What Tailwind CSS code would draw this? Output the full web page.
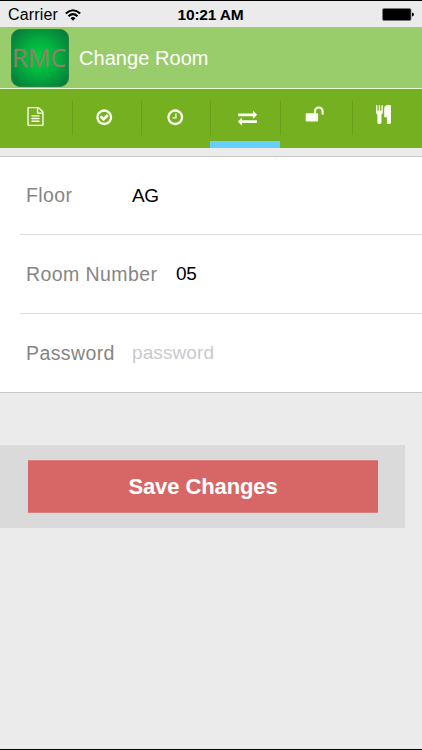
<!DOCTYPE html>
<html lang="en">
<head>
<meta charset="utf-8">
<title>Change Room</title>
<script src="https://cdn.jsdelivr.net/npm/@tailwindcss/browser@4"></script>
</head>
<body class="h-[750px] w-[422px] overflow-hidden border-b border-black bg-[#ebebeb] font-['Liberation_Sans',Arial,sans-serif]">
<div class="grid h-[27px] grid-cols-3 items-center border-t border-black bg-[#ebebeb] pt-px text-black">
  <div class="flex items-center gap-[7px] pl-2">
    <span class="text-base leading-none tracking-[0.15px]">Carrier</span>
    <svg class="h-3 w-4" viewBox="0 0 16 12" fill="none" stroke="#000" stroke-width="2"><path d="M.8 4.6Q8-2.2 15.200 4.600M3.500 7.300Q8 3 12.500 7.300"/><path d="M5.500 9.200Q8 7 10.500 9.200L8 11.800Z" fill="#000" stroke="none"/></svg>
  </div>
  <span class="pr-px text-center text-[15.5px] leading-none font-bold tracking-[-0.2px]">10:21 AM</span>
  <svg class="mr-[8px] h-[13px] w-8 justify-self-end" viewBox="0 0 32 13"><rect x=".5" y=".5" width="28.500" height="12" rx="1.500" fill="#000" stroke="#777" stroke-width=".8"/><path d="M30 4.500Q32 5 32 6.500T30 8.500Z"/></svg>
</div>
<header class="flex h-[61px] items-center gap-[10px] bg-[#99cd6b] pl-[11px]">
  <svg class="h-[58px] w-[58px]" viewBox="0 0 58 58">
    <defs><radialGradient id="g" cx=".5" cy=".5" r=".68"><stop offset="0" stop-color="#00d042"/><stop offset=".4" stop-color="#00b53f"/><stop offset="1" stop-color="#08743a"/></radialGradient></defs>
    <rect x=".5" y=".5" width="57" height="57" rx="8.500" fill="url(#g)" stroke="#278947"/>
    <text x="1" y="38" textLength="54" lengthAdjust="spacingAndGlyphs" font-family="Open Sans, sans-serif" font-size="26" fill="#8a8266" stroke="#8a8266" stroke-width=".3">RMC</text>
  </svg>
  <h1 class="text-xl leading-none tracking-[0.05px] text-white">Change Room</h1>
</header>
<nav class="flex h-[60px] border-t-[1.5px] border-[#e8f5d5] bg-[#74b01f] text-[#fbfff2]">
  <div class="flex w-[73px] shrink-0 justify-between pl-[26px]"><svg class="mt-[18px] size-[19px]" viewBox="0 0 1792 1792" fill="currentColor"><path d="M1596 380q28 28 48 76t20 88v1152q0 40-28 68t-68 28h-1344q-40 0-68-28t-28-68v-1600q0-40 28-68t68-28h896q40 0 88 20t76 48zm-444-244v376h376q-10-29-22-41l-313-313q-12-12-41-22zm384 1528v-1024h-416q-40 0-68-28t-28-68v-416h-768v1536h1280zm-1024-864q0-14 9-23t23-9h704q14 0 23 9t9 23v64q0 14-9 23t-23 9h-704q-14 0-23-9t-9-23v-64zm736 224q14 0 23 9t9 23v64q0 14-9 23t-23 9h-704q-14 0-23-9t-9-23v-64q0-14 9-23t23-9h704zm0 256q14 0 23 9t9 23v64q0 14-9 23t-23 9h-704q-14 0-23-9t-9-23v-64q0-14 9-23t23-9h704z"/></svg><div class="mt-3 h-[34px] w-px bg-[#68a01a]"></div></div>
  <div class="flex w-[68px] pt-[18.500px] pl-[22px]"><svg class="size-[18.500px]" viewBox="0 0 1792 1792" fill="currentColor"><path d="M1299 813l-422 422q-19 19-45 19t-45-19l-294-294q-19-19-19-45t19-45l102-102q19-19 45-19t45 19l147 147 275-275q19-19 45-19t45 19l102 102q19 19 19 45t-19 45zm141 83q0-148-73-273t-198-198-273-73-273 73-198 198-73 273 73 273 198 198 273 73 273-73 198-198 73-273zm224 0q0 209-103 385.500t-279.500 279.500-385.500 103-385.500-103-279.500-279.500-103-385.500 103-385.500 279.500-279.500 385.500-103 385.500 103 279.500 279.500 103 385.500z"/></svg></div>
  <div class="mt-3 h-[34px] w-px bg-[#68a01a]"></div>
  <div class="flex w-[68px] pt-[18.500px] pl-[24px]"><svg class="size-[18.500px]" viewBox="0 0 1792 1792" fill="currentColor"><path d="M1024 544v448q0 14-9 23t-23 9h-320q-14 0-23-9t-9-23v-64q0-14 9-23t23-9h224v-352q0-14 9-23t23-9h64q14 0 23 9t9 23zm416 352q0-148-73-273t-198-198-273-73-273 73-198 198-73 273 73 273 198 198 273 73 273-73 198-198 73-273zm224 0q0 209-103 385.500t-279.500 279.500-385.500 103-385.500-103-279.500-279.500-103-385.500 103-385.500 279.500-279.500 385.500-103 385.500 103 279.500 279.500 103 385.500z"/></svg></div>
  <div class="flex w-[70px] flex-col justify-between">
    <div class="flex"><div class="mt-3 h-[34px] w-px bg-[#68a01a]"></div><svg class="mt-[18.500px] ml-[27px] size-[19px]" viewBox="0 0 1792 1792" fill="currentColor"><path d="M1792 1184v192q0 13-9.500 22.500t-22.500 9.500h-1376v192q0 13-9.500 22.500t-22.500 9.500q-12 0-24-10l-319-320q-9-9-9-22 0-14 9-23l320-320q9-9 23-9 13 0 22.500 9.500t9.500 22.500v192h1376q13 0 22.500 9.500t9.500 22.500zm0-544q0 14-9 23l-320 320q-9 9-23 9-13 0-22.500-9.500t-9.500-22.500v-192h-1376q-13 0-22.500-9.500t-9.500-22.500v-192q0-13 9.500-22.500t22.500-9.500h1376v-192q0-14 9-23t23-9q12 0 24 10l319 319q9 9 9 23z"/></svg></div>
    <div class="h-[7.500px] w-[70px] bg-[#66cffb]"></div>
  </div>
  <div class="mt-3 h-[34px] w-px bg-[#68a01a]"></div>
  <div class="flex w-[71px] pt-[16px] pl-[24px]"><svg class="size-[19.300px]" viewBox="0 0 1792 1792" fill="currentColor"><path d="M1728 576v256q0 26-19 45t-45 19h-64q-26 0-45-19t-19-45v-256q0-106-75-181t-181-75-181 75-75 181v192h96q40 0 68 28t28 68v576q0 40-28 68t-68 28h-960q-40 0-68-28t-28-68v-576q0-40 28-68t68-28h672v-192q0-185 131.500-316.500t316.500-131.500 316.500 131.500 131.500 316.500z"/></svg></div>
  <div class="mt-3 h-[34px] w-px bg-[#68a01a]"></div>
  <div class="flex flex-1 pt-[16px] pl-[21px]"><svg class="size-[19px]" viewBox="0 0 1792 1792" fill="currentColor"><path d="M832 64v640q0 61-35.500 111t-92.500 70v779q0 52-38 90t-90 38h-128q-52 0-90-38t-38-90v-779q-57-20-92.500-70t-35.500-111v-640q0-26 19-45t45-19 45 19 19 45v416q0 26 19 45t45 19 45-19 19-45v-416q0-26 19-45t45-19 45 19 19 45v416q0 26 19 45t45 19 45-19 19-45v-416q0-26 19-45t45-19 45 19 19 45zm768 0v1600q0 52-38 90t-90 38h-128q-52 0-90-38t-38-90v-512h-224q-13 0-22.500-9.500t-9.500-22.500v-800q0-132 94-226t226-94h256q26 0 45 19t19 45z"/></svg></div>
</nav>
<main class="pt-2">
  <form>
    <div class="border-y border-[#c8c8c8] bg-white text-[19.500px] text-[#858585]">
      <div class="flex h-[77px] items-center pt-px pl-[26px]"><span class="w-[106px] tracking-[0.4px]">Floor</span><span class="text-[19px] tracking-[-0.5px] text-black">AG</span></div>
      <div class="ml-5 flex h-[79px] items-center border-t border-[#dedede] pt-px pl-[6px]"><span class="w-[150px] tracking-[0.42px]">Room Number</span><span class="text-[19px] tracking-[-0.3px] text-black">05</span></div>
      <div class="ml-5 flex h-[79px] items-center border-t border-[#dedede] pt-px pl-[6px]"><span class="w-[106px] tracking-[0.4px]">Password</span><span class="text-[19px] tracking-[0.1px] text-[#c9c9cd]">password</span></div>
    </div>
    <div class="mt-[52px] h-[83px] w-[405px] bg-[#dadada] pt-[15px] pl-7">
      <button type="button" class="block h-[53px] w-[350px] border-y border-[#dc8080] bg-[#d76767] text-[22px] font-bold tracking-[-0.1px] text-white">Save Changes</button>
    </div>
  </form>
</main>
</body>
</html>
